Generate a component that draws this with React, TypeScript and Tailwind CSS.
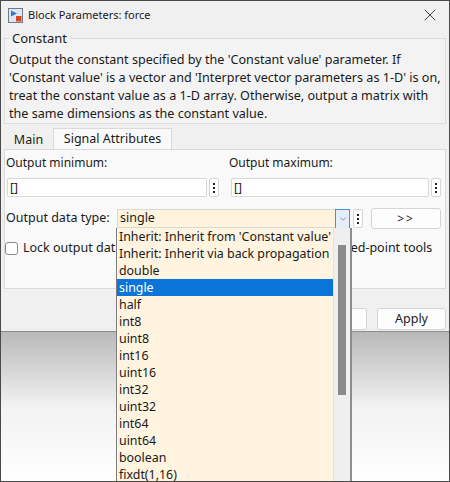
import { ChevronDown, X } from 'lucide-react';

const ITEMS = [
  "Inherit: Inherit from 'Constant value'",
  'Inherit: Inherit via back propagation',
  'double',
  'single',
  'half',
  'int8',
  'uint8',
  'int16',
  'uint16',
  'int32',
  'uint32',
  'int64',
  'uint64',
  'boolean',
  'fixdt(1,16)',
];

function BlockIcon() {
  return (
    <svg width="15" height="15" viewBox="0 0 15 15">
      <rect x="0.5" y="0.5" width="14" height="14" fill="#dfe6ee" stroke="#6b7a8c" />
      <path d="M3 2.5 L9 5.5 L3 8.5 Z" fill="#2a7bd1" />
      <rect x="8" y="8" width="5.5" height="5.5" fill="#d9461f" />
    </svg>
  );
}

function Kebab() {
  return (
    <div className="w-[10px] h-[19px] bg-white border border-[#d6d6d6] rounded-[2px] flex flex-col items-center justify-center gap-[2px]">
      <span className="w-[2px] h-[2px] bg-[#222]" />
      <span className="w-[2px] h-[2px] bg-[#222]" />
      <span className="w-[2px] h-[2px] bg-[#222]" />
    </div>
  );
}

function Btn({ label }: { label: string }) {
  return (
    <div className="w-[69px] h-[22px] bg-[#fdfdfd] border border-[#d3d3d3] rounded-[3px] flex items-center justify-center">
      {label}
    </div>
  );
}

export default function App() {
  return (
    <div
      className="relative w-[450px] h-[482px] overflow-hidden border border-[#4a4a4a] bg-white text-[12px] text-[#1a1a1a] flex flex-col"
      style={{ fontFamily: '"Noto Sans", "Open Sans", sans-serif' }}
    >
      <div className="h-[331px] shrink-0 bg-[#f0f0f0] border-b border-[#8c8c8c] flex flex-col">
        {/* title bar */}
        <div className="h-[28px] flex items-center pl-[7px] pr-[9px]">
          <BlockIcon />
          <span className="ml-[5px] text-[11px]">Block Parameters: force</span>
          <X className="ml-auto" size={20} strokeWidth={1} color="#222" />
        </div>

        {/* description group */}
        <fieldset className="mx-[3px] border border-[#dcdcdc] bg-[#f3f3f3] px-[4px] text-[12.6px]">
          <legend className="px-[3px] ml-[0px] leading-[18px] text-[13px]">Constant</legend>
          <p className="leading-[18px] mt-[4px] whitespace-nowrap">
            Output the constant specified by the 'Constant value' parameter. If
            <br />
            'Constant value' is a vector and 'Interpret vector parameters as 1-D' is on,
            <br />
            treat the constant value as a 1-D array. Otherwise, output a matrix with
            <br />
            the same dimensions as the constant value.
          </p>
        </fieldset>

        {/* tabs */}
        <div className="mt-[4px] mx-[3px] flex items-end h-[21px] text-[12.5px]">
          <div className="w-[49px] h-[20px] flex items-center justify-center pt-[2px]">Main</div>
          <div className="w-[119px] h-[21px] bg-[#f9f9f9] border border-b-0 border-[#dadada] flex items-center justify-center">
            Signal Attributes
          </div>
        </div>

        {/* panel */}
        <div className="mx-[3px] h-[140px] bg-[#f9f9f9] border border-[#dadada] px-[1px] pt-[3px] flex flex-col">
          <div className="flex">
            <div className="w-[223px] leading-[19px]">Output minimum:</div>
            <div className="leading-[19px]">Output maximum:</div>
          </div>
          <div className="flex items-center mt-[6px]">
            <div className="ml-[1px] w-[200px] h-[19px] bg-white border border-[#d8d8d8] rounded-[2px] flex items-center pl-[2px]">
              []
            </div>
            <div className="ml-[2px]">
              <Kebab />
            </div>
            <div className="ml-[12px] w-[198px] h-[19px] bg-white border border-[#d8d8d8] rounded-[2px] flex items-center pl-[2px]">
              []
            </div>
            <div className="ml-[2px]">
              <Kebab />
            </div>
          </div>
          <div className="flex items-center mt-[11px] h-[21px]">
            <div className="w-[111px] text-[12.5px]">Output data type:</div>
            <div className="w-[218px] h-[19px] bg-[#fff3dd] border border-[#d8d8d8] border-r-0 flex items-center pl-[2px] text-[12.5px]">
              single
            </div>
            <div className="w-[15px] h-[20px] bg-[#e3eefa] border border-[#4a90d6] flex items-center justify-center">
              <ChevronDown size={10} strokeWidth={1.5} color="#666" />
            </div>
            <div className="ml-[3px]">
              <Kebab />
            </div>
            <div className="ml-[8px] w-[70px] h-[21px] bg-[#fdfdfd] border border-[#d3d3d3] rounded-[3px] flex items-center justify-center tracking-[2px]">
              &gt;&gt;
            </div>
          </div>
          <div className="flex items-center mt-[10px] h-[18px]">
            <div className="ml-[-1px] w-[13px] h-[13px] bg-white border border-[#8a8a8a] rounded-[3px]" />
            <span className="ml-[5px] whitespace-nowrap text-[12.5px]">
              Lock output data type setting against changes by the fixed-point tools
            </span>
          </div>
        </div>

        {/* buttons */}
        <div className="flex justify-end gap-[10px] pr-[3px] mt-[19px] text-[12.5px]">
          <Btn label="OK" />
          <Btn label="Cancel" />
          <Btn label="Help" />
          <Btn label="Apply" />
        </div>
      </div>

      <div className="flex-1 bg-gradient-to-b from-[#b9b9b9] via-[#f2f2f2] via-50% to-white" />

      {/* open dropdown list */}
      <div className="absolute left-[115px] top-[227px] w-[236px] bottom-0 flex border-l border-[#7d7d7d] border-r-2 border-r-[#8d8d8d] bg-[#fff4e0] text-[12.4px]">
        <div className="w-[216px]">
          {ITEMS.map((t) => (
            <div
              key={t}
              className={`h-[17px] leading-[17px] pl-[2px] whitespace-nowrap ${
                t === 'single' ? 'bg-[#0a74d8] text-white' : ''
              }`}
            >
              {t}
            </div>
          ))}
        </div>
        <div className="flex-1 bg-[#efefef] border-l border-[#e2e2e2] pt-[17px] flex justify-center">
          <div className="w-[8px] h-[150px] bg-[#8a8a8a]" />
        </div>
      </div>
    </div>
  );
}
